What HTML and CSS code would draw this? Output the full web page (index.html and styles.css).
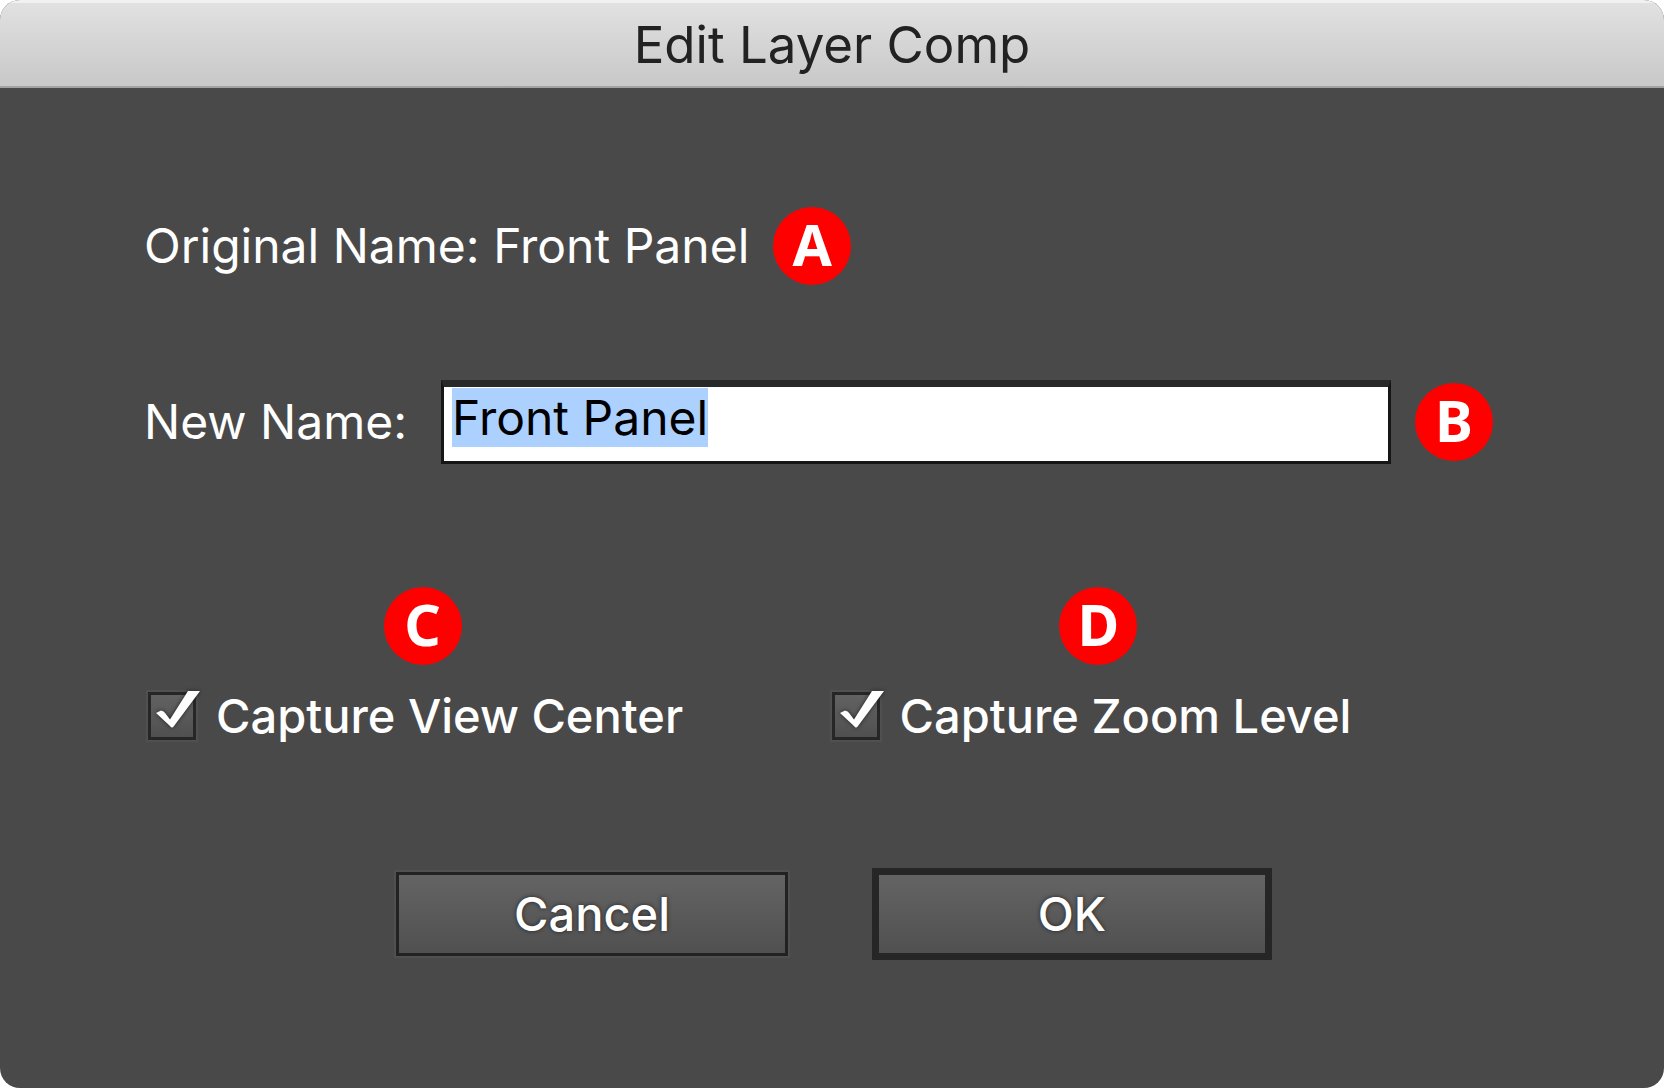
FILE: index.html
```html
<!DOCTYPE html>
<html lang="en">

<head>
	<meta charset="utf-8">
	<title>Edit Layer Comp</title>
	<link rel="stylesheet" href="styles.css">
</head>

<body>
	<form class="dialog">
		<header class="titlebar">
			<h1>Edit Layer Comp</h1>
		</header>
		<main class="content">
			<div class="original">
				<p>Original Name: Front Panel</p>
				<span class="badge">A</span>
			</div>
			<div class="name">
				<label for="newName">New Name:</label>
				<input type="text" id="newName" value="Front Panel" spellcheck="false" autocomplete="off">
				<span class="badge">B</span>
			</div>
			<div class="options">
				<div class="option">
					<span class="badge">C</span>
					<label class="check">
						<span class="box">
							<input type="checkbox" checked>
							<svg class="tick" viewBox="0 0 48 48"><path d="M8 21 L13 18.5 Q16 19 17.5 21.5 L22 27.5 L40 -1 H52 L26 34 Q24 37 22 34 Z"/></svg>
						</span>
						Capture View Center
					</label>
				</div>
				<div class="option">
					<span class="badge">D</span>
					<label class="check">
						<span class="box">
							<input type="checkbox" checked>
							<svg class="tick" viewBox="0 0 48 48"><path d="M8 21 L13 18.5 Q16 19 17.5 21.5 L22 27.5 L40 -1 H52 L26 34 Q24 37 22 34 Z"/></svg>
						</span>
						Capture Zoom Level
					</label>
				</div>
			</div>
			<div class="buttons">
				<button type="button">Cancel</button>
				<button type="button" class="default">OK</button>
			</div>
		</main>
	</form>

	<script>
		// select the whole name when the dialog opens
		var input = document.querySelector('#newName');
		input.focus();
		input.select();
	</script>
</body>

</html>
```
FILE: styles.css
```css
* {
	box-sizing: border-box;
}

body {
	margin: 0;
	background: #fff;
	font-family: Inter, "Liberation Sans", sans-serif;
	font-size: 48px;
	line-height: 58px;
	color: #fff;
}

.dialog {
	min-height: 100vh;
	background: #494949;
	border-radius: 20px;
	overflow: hidden;
}

.titlebar {
	height: 88px;
	background: linear-gradient(#e1e1e1, #c8c8c8);
	border-top: 3px solid #f1f1f1;
	border-bottom: 2px solid #a2a2a2;
	text-align: center;
}

.titlebar h1 {
	margin: 0;
	font-size: 51px;
	font-weight: 400;
	line-height: 84px;
	color: #222;
}

.content {
	padding: 119px 171px 128px 144px;
}

.original {
	display: flex;
	align-items: center;
	gap: 24px;
	margin-bottom: 95px;
}

.original p {
	margin: 0;
}

.badge {
	flex: none;
	width: 78px;
	height: 78px;
	border-radius: 50%;
	background: #f00;
	font-family: "Noto Sans", sans-serif;
	font-size: 57px;
	font-weight: 700;
	line-height: 74px;
	text-align: center;
}

.name {
	display: grid;
	grid-template-columns: 273px 1fr 78px;
	align-items: center;
	gap: 24px;
	margin-bottom: 123px;
}

.name input {
	width: 100%;
	height: 84px;
	padding: 0 8px 14px;
	border: 3px solid #161616;
	border-top: 7px solid #282828;
	border-radius: 0;
	outline: none;
	background: #fff;
	font: inherit;
	color: #000;
}

.name input::selection {
	background: rgba(172, 208, 255, 0.99);
	color: #000;
}

.options {
	display: grid;
	grid-template-columns: 1fr 1fr;
	gap: 22px;
	margin-bottom: 123px;
	padding-left: 4px;
}

.option {
	display: flex;
	flex-direction: column;
	align-items: center;
	justify-self: start;
	gap: 22px;
}

.option .badge {
	margin-left: 14px;
}

.check {
	display: flex;
	align-items: center;
	gap: 20px;
	font-size: 47px;
	font-weight: 500;
	white-space: nowrap;
}

.box {
	position: relative;
	width: 48px;
	height: 48px;
}

.box input {
	appearance: none;
	display: block;
	width: 48px;
	height: 48px;
	margin: 0;
	border: 3px solid #262626;
	background: linear-gradient(#626262, #505050);
	box-shadow: 0 0 0 2px #505050;
}

.tick {
	position: absolute;
	left: 0;
	top: 0;
	width: 48px;
	height: 48px;
	overflow: visible;
	fill: #fff;
	filter: drop-shadow(0 0 2px #222);
	pointer-events: none;
	display: none;
}

.box input:checked + .tick {
	display: block;
}

.buttons {
	display: flex;
	align-items: center;
	justify-content: center;
	gap: 84px;
	margin-right: -31px;
}

.buttons button {
	width: 392px;
	height: 84px;
	padding: 0;
	border: 3px solid #222;
	background: linear-gradient(#646464, #505050);
	box-shadow: 0 0 0 2px #505050;
	font: inherit;
	font-size: 47px;
	font-weight: 500;
	color: #fff;
	text-shadow: 0 0 4px #222;
}

.buttons .default {
	width: 400px;
	height: 92px;
	border-width: 7px;
	border-color: #262626;
	box-shadow: none;
}
```
